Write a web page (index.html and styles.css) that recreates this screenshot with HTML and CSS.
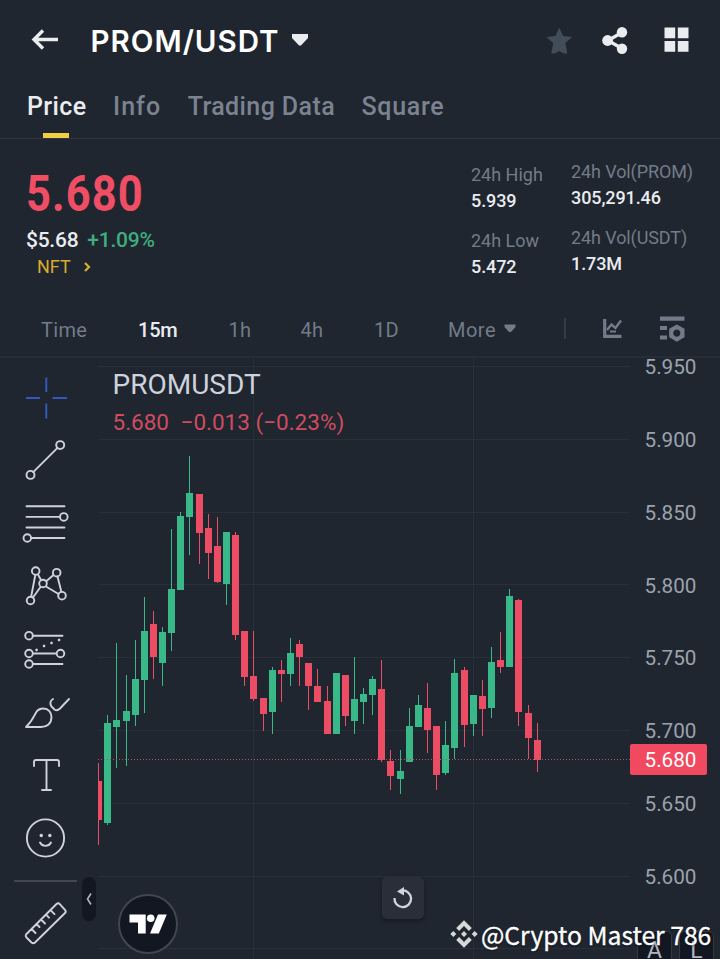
FILE: index.html
```
<!DOCTYPE html>
<html lang="en">
<head>
<meta charset="utf-8">
<title>PROM/USDT</title>
<link rel="stylesheet" href="styles.css">
</head>
<body>
<header class="topbar">
  <svg class="back" viewBox="30 26 30 28"><path d="M58 39.5H34M43 30.5L34 39.5L43 48.500"/></svg>
  <h1 class="pair">PROM/USDT</h1>
  <svg class="pair-caret" viewBox="290 30 20 20"><path d="M292 34h16v4l-7 7.500h-2l-7-7.500z"/></svg>
  <div class="actions">
    <svg class="star" viewBox="545 26 28 28"><path d="M559.300 27.500l3.800 8.400 9.100 1-6.800 6.200 1.900 10.400h-3.500l-4.500-2.500-4.500 2.500h-3.500l1.900-10.400-6.800-6.200 9.100-1z"/></svg>
    <svg class="share" viewBox="601 25 28 28"><path d="M622 31.500L608 39.500L622 47.500"/><circle cx="622" cy="31.300" r="5.200"/><circle cx="607.600" cy="39.500" r="5.400"/><circle cx="622" cy="47.700" r="5.200"/></svg>
    <svg class="apps" viewBox="663 26 28 28"><path d="M664.500 27.500h10.700v10.700h-10.700zM677.800 27.500h10.700v10.700h-10.700zM664.500 41h10.700v10.700h-10.700zM677.800 41h10.700v10.700h-10.700z"/></svg>
  </div>
</header>
<nav class="tabs">
  <span class="tab active">Price</span><span class="tab info">Info</span><span class="tab">Trading Data</span><span class="tab square">Square</span>
</nav>
<section class="summary">
  <div class="quote">
    <div class="price">5.680</div>
    <div class="fiat"><span>$5.68</span><span class="up">+1.09%</span></div>
    <div class="tag">NFT<svg viewBox="0 0 10 14"><path d="M2 3l4 4-4 4"/></svg></div>
  </div>
  <div class="stats stats-left">
    <div class="label">24h High</div><div class="value">5.939</div>
    <div class="label">24h Low</div><div class="value">5.472</div>
  </div>
  <div class="stats stats-right">
    <div class="label">24h Vol(PROM)</div><div class="value">305,291.46</div>
    <div class="label">24h Vol(USDT)</div><div class="value">1.73M</div>
  </div>
</section>
<nav class="intervals">
  <span class="i-time">Time</span><span class="i-15 on">15m</span><span class="i-1h">1h</span><span class="i-4h">4h</span><span class="i-1d">1D</span>
  <span class="i-more">More<svg viewBox="0 0 12 9"><path d="M.5.500h11v2.500L7 8H5L.5 3z"/></svg></span>
  <i class="divider"></i>
  <svg class="i-chart" viewBox="600 316 24 24"><path d="M604.700 319v17.300H621.500" stroke-width="3.200"/><path d="M607 330l4.500-5.500 4 3.500 5.500-7.500" stroke-width="2.400"/><path d="M610 331.500h6" stroke-width="2"/></svg>
  <svg class="i-settings" viewBox="659 314 28 28"><path class="bars" d="M661 316.600h24.500v4.200H661zM661 326h7v4h-7zM661 335.500h7v4h-7z"/><path class="hex" fill-rule="evenodd" d="M677.800 324.500l7.700 4.300v8.500l-7.700 4.400-7.600-4.400v-8.500zM677.800 329.500a3.600 3.600 0 1 0 .01 0z"/></svg>
</nav>
<main class="chart">
  <aside class="tools">
    <svg class="tool cross" viewBox="0 366.500 98 63"><path d="M46.300 378v14.500M46.300 404v15M26 398.500h14M52.500 398.500H67"/></svg>
    <svg class="tool" viewBox="0 429.500 98 63"><path d="M33.200 472.700L57.500 448.300"/><circle cx="30.500" cy="475.400" r="4"/><circle cx="60.200" cy="445.600" r="4"/></svg>
    <svg class="tool" viewBox="0 492.500 98 63"><path d="M26.500 506.800h38M26.500 517.400h33M26.500 528h38M31 538.500h33.500"/><circle cx="63.800" cy="517.400" r="3.800"/><circle cx="27.300" cy="538.500" r="3.800"/></svg>
    <svg class="tool" viewBox="0 555.500 98 63"><path d="M35.300 575.500L31.200 597M38 575l3 5.500M46.500 581.500l7-6M46 587l12.500 7.500M57.500 577l3.800 15M33 598l7.500-10.500"/><circle cx="35.700" cy="571.500" r="3.800"/><circle cx="56.700" cy="573.200" r="3.800"/><circle cx="43" cy="584" r="3.800"/><circle cx="30.500" cy="601" r="3.800"/><circle cx="62" cy="596.200" r="3.800"/></svg>
    <svg class="tool" viewBox="0 618.500 98 63"><path d="M33 636.200h29.500M33 654h23M33 664.500h29.500"/><circle cx="29" cy="636.200" r="3.800"/><circle cx="29" cy="654" r="3.800"/><circle cx="60.500" cy="654" r="3.800"/><circle cx="29" cy="664.500" r="3.800"/><path d="M36.500 650.500l.1-.04M44 646.500l.1-.04M51.500 643.500l.1-.04M59 640.500l.1-.04" stroke-width="2.600"/></svg>
    <svg class="tool" viewBox="0 681.500 98 63"><path d="M26 727.500C32 722 34 716.500 36 713C38 709.500 41 709 43.500 709C48.500 709 51.500 713 51.500 717.500C51.500 724 47 727.500 41 727.500ZM53 699.500C49.500 701.500 50 704.500 51.500 707L54.500 710C56 711 58.500 710.500 60 709L69 699.500"/></svg>
    <svg class="tool" viewBox="0 744.500 98 63"><path d="M34 766.500V762.500Q34 760.500 36 760.500H57Q59 760.500 59 762.500V766.500M46.500 760.500V790.500M42 790.500H51"/></svg>
    <svg class="tool" viewBox="0 807.500 98 63"><circle cx="45.500" cy="838.500" r="18.600"/><path d="M40 843C42.500 847.500 48.500 847.500 51 843"/><path d="M41.200 836h.1M49.800 836h.1" stroke-width="3.400"/></svg>
    <hr>
    <svg class="tool ruler" viewBox="0 891.500 98 63"><path d="M26 935Q25 936.500 26.500 938L31.500 943Q33.300 944.500 35 943L65 913.500Q66.500 912 65 910.300L60 904.800Q58.300 903 56.500 904.500ZM31.500 929.500l4 4M36.500 924.500l3 3M41 920l4 4M46 915.200l3 3M50.500 910.700l4 4"/></svg>
  </aside>
  <div class="plot">
    <svg class="candles" viewBox="98 357 532 602">
      <path class="grid" d="M98 366.500H630M98 439.500H630M98 512.500H630M98 584.500H630M98 657.500H630M98 730.500H630M98 803.500H630M98 876.500H630M98 948.500H630M253.500 357V959M473.500 357V959"/>
      <g id="series"></g>
      <path class="last" d="M98 759.500H630"/>
    </svg>
    <div class="legend">
      <div class="symbol">PROMUSDT</div>
      <div class="change"><span>5.680</span><span>−0.013 (−0.23%)</span></div>
    </div>
    <div class="handle"><svg viewBox="0 0 8 14"><path d="M6 1.500L2.500 7 6 12.500"/></svg></div>
    <div class="tv"><svg viewBox="128 914 40 22"><path d="M129.500 915.500H145.700V934.500H138V923.500H129.500zM158 915.500H166.800L158.800 934.500H150z"/><circle cx="150.700" cy="919.200" r="3.800"/></svg></div>
    <div class="reset"><svg viewBox="392 886 22 24"><path class="arc" d="M402 890.500A8.300 8.300 0 1 1 394.500 898"/><path class="tip" d="M397 891.500L404 887V895.500z"/></svg></div>
  </div>
  <div class="axis">
    <span>5.950</span><span>5.900</span><span>5.850</span><span>5.800</span><span>5.750</span><span>5.700</span><span>5.650</span><span>5.600</span>
    <b class="last-price">5.680</b>
    <b class="mode mode-a">A</b><b class="mode mode-l">L</b>
  </div>
  <div class="watermark"><svg viewBox="450 921 28 28"><path d="M464 921.300l7.800 7.800-2.900 2.900-4.900-4.900-4.900 4.900-2.900-2.900zM464 948.700l7.800-7.800-2.900-2.900-4.900 4.900-4.900-4.900-2.900 2.900zM453.300 932l3 3-3 3-3-3zM474.700 932l3 3-3 3-3-3zM464 932l3 3-3 3-3-3z"/></svg><span>@Crypto Master 786</span></div>
</main>
<script src="chart.js"></script>
</body>
</html>
```
FILE: styles.css
```
* { box-sizing: border-box; }
body {
  margin: 0; width: 720px; height: 959px; overflow: hidden;
  display: flex; flex-direction: column;
  background: #1f262f; color: #eaecef;
  font-family: Roboto, "Liberation Sans", sans-serif;
}
svg { display: block; flex: none; fill: none; }

.topbar { height: 80px; padding-left: 30px; display: flex; align-items: center; }
.back { width: 30px; height: 28px; stroke: #eaecef; stroke-width: 3.4; }
.pair { margin: 2px 0 0 30.5px; width: 199.5px; font: 600 29.5px/40px Inter, sans-serif; letter-spacing: 1px; color: #fff; white-space: nowrap; }
.pair-caret { width: 20px; height: 20px; fill: #eaecef; }
.actions { margin-left: 235px; display: flex; align-items: center; }
.actions svg { width: 28px; height: 28px; }
.star { fill: #434c5a; }
.share { margin-left: 28px; fill: #eaecef; stroke: #eaecef; }
.share path { fill: none; stroke-width: 3.4; }
.share circle { stroke: none; }
.apps { margin-left: 34px; fill: #eaecef; }

.tabs { height: 59px; padding-left: 27px; display: flex; gap: 26.5px; border-bottom: 1px solid #2f363f; font-weight: 500; font-size: 25px; line-height: 54px; letter-spacing: .4px; color: #7b8391; }
.tab { position: relative; height: 58px; white-space: nowrap; }
.info { letter-spacing: 1px; }
.square { letter-spacing: .7px; }
.tab.active { color: #eaecef; }
.tab.active::after { content: ""; position: absolute; left: 16px; bottom: 0; width: 26px; height: 5px; background: #f0cf45; }

.summary { height: 163px; display: flex; padding-left: 26px; }
.quote { width: 445px; padding-top: 30px; }
.price { height: 50px; font-size: 50px; line-height: 50px; font-weight: 700; letter-spacing: 1.2px; transform: scaleX(.87); transform-origin: left; color: #ef4e65; }
.fiat { margin-top: 8px; display: flex; gap: 9px; font-size: 21px; line-height: 26px; font-weight: 500; letter-spacing: -.25px; }
.up { color: #3fae7f; }
.tag { padding-left: 11px; display: flex; align-items: center; gap: 12.5px; font-size: 18px; line-height: 28px; color: #d9ad2f; }
.tag svg { width: 10px; height: 14px; stroke: #d9ad2f; stroke-width: 2.2; }
.stats { font-size: 18px; line-height: 26px; white-space: nowrap; }
.stats-left { width: 100px; padding-top: 23px; }
.stats-right { padding-top: 20px; letter-spacing: -.1px; }
.label { color: #737b88; }
.value { font-weight: 500; margin-bottom: 14px; letter-spacing: -.1px; }

.intervals { height: 54px; padding: 2px 0 0 41px; display: flex; align-items: center; font-size: 20px; letter-spacing: .3px; color: #737b88; }
.i-time { width: 97px; }
.on { color: #eaecef; font-weight: 500; letter-spacing: -.2px; }
.i-15 { width: 90.5px; }
.i-1h { width: 72px; }
.i-4h { width: 73.5px; }
.i-1d { width: 74px; }
.i-more { width: 116px; display: flex; align-items: center; gap: 8px; letter-spacing: .5px; }
.i-more svg { width: 12px; height: 9px; margin-top: -4px; fill: #737b88; }
.divider { width: 2px; height: 21px; background: #343b46; margin-top: -3px; }
.i-chart { width: 24px; height: 24px; margin: -5px 0 0 33.5px; stroke: #737b8b; }
.i-settings { width: 28px; height: 28px; margin: -4px 0 0 34.5px; fill: #737b8b; }

.chart { position: relative; height: 603px; display: flex; border-top: 2px solid #272d37; }
.tools { width: 98px; height: 601px; padding-top: 8px; overflow: hidden; }
.tool { width: 98px; height: 63px; stroke: #ced2dc; stroke-width: 1.9; stroke-linecap: round; stroke-linejoin: round; }
.cross { stroke: #3557bd; stroke-linecap: butt; stroke-width: 2; }
.tools hr { width: 63px; height: 2px; margin: 9.5px 0 9.5px 14px; border: 0; background: #434751; }
.plot { position: relative; width: 532px; }
.candles { width: 532px; height: 602px; margin-top: -1px; }
.grid { stroke: #292f38; stroke-width: 1; }
.last { stroke: #bd5262; stroke-width: 1; stroke-dasharray: 1 2; }
.rise { fill: #38b987; }
.fall { fill: #ec4c64; }
.legend { position: absolute; left: 14.5px; top: 10px; white-space: nowrap; }
.symbol { font-size: 28px; line-height: 34px; letter-spacing: 0; color: #ced2dc; }
.change { margin-top: 7px; display: flex; gap: 11.5px; font-size: 22.5px; line-height: 26px; color: #cf4c60; }
.handle { position: absolute; left: -16px; top: 519px; width: 14px; height: 44px; border-radius: 7px; background: #131722; display: grid; place-items: center; }
.handle svg { width: 8px; height: 14px; stroke: #b2b5be; stroke-width: 1.6; }
.tv { position: absolute; left: 20px; top: 536px; width: 60px; height: 60px; border-radius: 50%; border: 2px solid #43454f; background: #131722; display: grid; place-items: center; }
.tv svg { width: 40px; height: 22px; fill: #fff; }
.reset { position: absolute; left: 284px; top: 519px; width: 42px; height: 42px; border-radius: 5px; background: #2a2e39; box-shadow: 0 2px 4px #151a22; display: grid; place-items: center; }
.reset svg { width: 22px; height: 24px; }
.arc { stroke: #d1d4dc; stroke-width: 2.3; }
.tip { fill: #d1d4dc; }
.axis { position: relative; width: 90px; height: 601px; display: flex; flex-direction: column; overflow: hidden; font-size: 20.7px; color: #9ca2ad; }
.axis span { flex: none; height: 72.86px; line-height: 72.86px; padding-left: 14.500px; }
.axis span:first-child { margin-top: -27px; }
.last-price { position: absolute; left: 0; top: 386px; width: 77px; height: 31px; padding-left: 14.500px; border-radius: 2px; background: #f1495f; color: #fff; font-weight: 400; line-height: 32px; }
.mode { position: absolute; top: 573px; height: 40px; border: 1px solid #343842; border-radius: 5px; background: #131722; color: #b2b5be; font-weight: 400; font-size: 23px; line-height: 38px; text-align: center; }
.mode-a { left: 7px; width: 35px; }
.mode-l { left: 49px; width: 35px; }
.watermark { position: absolute; left: 450px; top: 558px; display: flex; align-items: center; gap: 3px; color: #fff; font: 400 24.700px/36px "Noto Sans CJK SC", "Noto Sans", sans-serif; -webkit-text-stroke: .3px #fff; white-space: nowrap; text-shadow: 0 1px 2px #1118; }
.watermark svg { width: 28px; height: 28px; fill: #d6d7d9; }
```
FILE: chart.js
```
// Each candle: centre x, wick top, wick bottom, body top, body bottom, rising?
const candles = [
  [107.5,715,825,723,823,1],[116.5,643,768,720,727,1],[126.5,675,766,711,721,1],[135.5,640,726,679,715,1],
  [144.5,597,713,631,680,1],[153.5,611,679,624,657,0],[162.5,627,686,632,663,1],[171.5,529,651,589,633,1],
  [180.5,512,590,516,590,1],[189.5,456,555,493,517,1],[199.5,494,564,494,533,0],[208.5,514,579,528,553,0],
  [217.5,517,583,546,582,0],[226.5,532,605,532,584,1],[235.5,532,640,535,635,0],[244.5,631,686,631,677,0],
  [253.5,631,701,676,699,0],[263.5,698,731,698,714,0],[272.5,667,734,670,712,1],[281.5,660,702,670,674,0],
  [290.5,638,686,653,674,1],[299.5,640,686,644,657,0],[308.5,663,710,663,686,0],[317.5,669,702,686,702,0],
  [327.5,686,734,701,734,0],[336.5,673,734,673,734,1],[345.5,675,726,675,716,0],[354.5,657,734,699,721,1],
  [363.5,688,724,694,702,1],[372.5,676,715,679,695,1],[381.5,660,762,689,760,0],[390.5,750,790,761,776,0],
  [400.5,750,794,771,779,1],[409.5,708,762,726,762,1],[418.5,695,727,705,727,1],[427.5,683,753,708,730,0],
  [436.5,726,790,726,775,0],[445.5,721,775,745,773,1],[454.5,659,759,673,748,1],[464.5,667,747,670,725,0],
  [473.5,695,736,695,724,1],[482.5,680,736,696,709,0],[491.5,647,718,662,708,1],[500.5,632,673,660,667,0],
  [509.5,589,667,596,667,1],[518.5,599,726,600,712,0],[528.5,705,759,713,738,0],[537.5,723,772,740,760,0]
];
const series = document.getElementById('series');
function bar(x, y, w, h, cls) {
  const r = document.createElementNS('http://www.w3.org/2000/svg', 'rect');
  r.setAttribute('x', x); r.setAttribute('y', y);
  r.setAttribute('width', w); r.setAttribute('height', h);
  r.setAttribute('class', cls);
  series.appendChild(r);
}
// The first candle is cut by the left edge of the plot.
bar(98, 763, 1, 82, 'fall');
bar(98, 781, 4, 39, 'fall');
for (const [x, hi, lo, top, bottom, up] of candles) {
  const cls = up ? 'rise' : 'fall';
  bar(x - 0.5, hi, 1, lo - hi, cls);
  bar(x - 3.5, top, 7, bottom - top, cls);
}
```
